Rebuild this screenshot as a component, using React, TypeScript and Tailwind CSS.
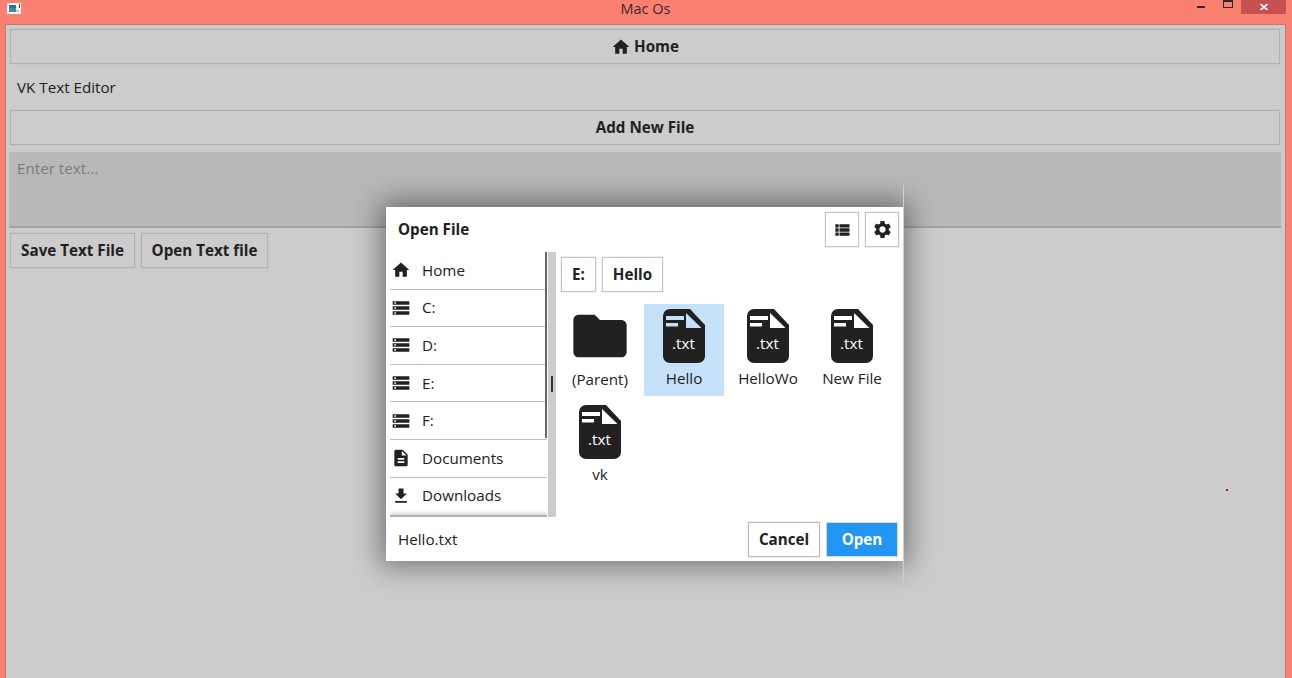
import { MdHome, MdStorage, MdDescription, MdFileDownload, MdSettings, MdFolder } from 'react-icons/md';

const places = [
  { label: 'Home', icon: MdHome },
  { label: 'C:', icon: MdStorage },
  { label: 'D:', icon: MdStorage },
  { label: 'E:', icon: MdStorage },
  { label: 'F:', icon: MdStorage },
  { label: 'Documents', icon: MdDescription },
  { label: 'Downloads', icon: MdFileDownload },
];

function TxtIcon({ hole }: { hole: string }) {
  return (
    <svg width="44" height="54" viewBox="0 0 44 54" className="block">
      <path d="M8 0H28L43 16V47a7 7 0 0 1-7 7H8a7 7 0 0 1-7-7V7a7 7 0 0 1 7-7Z" fill="#212121" />
      <rect x="4" y="7" width="18" height="4" fill={hole} />
      <rect x="4" y="14" width="12" height="3.500" fill={hole} />
      <path d="M24 4V19H39.500Z" fill={hole} />
      <text x="21.500" y="40" textAnchor="middle" fontSize="15.200" fill="#fff" fontFamily="'Open Sans', sans-serif">.txt</text>
    </svg>
  );
}

function FileCell({ name, selected }: { name: string; selected?: boolean }) {
  return (
    <div className={`w-20 h-[92px] flex flex-col items-center pt-[5px] ${selected ? 'bg-[#c6e2fa]' : ''}`}>
      <TxtIcon hole={selected ? '#c6e2fa' : '#ffffff'} />
      <span className="mt-[5px] leading-5">{name}</span>
    </div>
  );
}

export default function App() {
  return (
    <div className="relative h-[678px] w-[1292px] overflow-hidden flex flex-col bg-[#fa8072] text-[#212121] text-[15.200px] font-['Open_Sans',sans-serif]">
      {/* barre de titre */}
      <div className="h-6 shrink-0 flex items-start">
        <div className="flex-1 pl-[7px] pt-[3px]">
          <svg width="14" height="11" viewBox="0 0 14 11" className="block">
            <rect width="14" height="11" fill="#f4f4f4" />
            <rect x="2" y="2" width="7" height="7" fill="#3f8f8c" />
            <rect x="2" y="2" width="7" height="3" fill="#2f6f8f" />
            <rect x="9" y="7" width="3" height="2" fill="#c0c0c0" />
            <rect x="12" y="1" width="1" height="4" fill="#444444" />
          </svg>
        </div>
        <span className="text-[14.500px] leading-4 pt-px text-[#3a2a28] -translate-x-px">Mac Os</span>
        <div className="flex-1 flex justify-end items-start pr-[6px]">
          <div className="w-2 h-[2px] bg-[#2b2b2b] mt-[6px] mr-[18px]" />
          <div className="w-[10px] h-2 border border-[#2b2b2b] border-t-2 mr-2" />
          <div className="w-[45px] h-[14px] bg-[#c75050] flex items-center justify-center">
            <svg width="8" height="6" viewBox="0 0 8 6"><path d="M0.500 0 7.500 6M7.500 0 0.500 6" stroke="#fff" strokeWidth="1.600" /></svg>
          </div>
        </div>
      </div>

      {/* contenu */}
      <div className="flex-1 ml-[5px] mr-[6px] bg-[#cccccc] border-l border-t border-r border-[#c47a70] pl-1 pr-[5px] pt-1 flex flex-col">
        <button className="h-[35px] shrink-0 border border-[#b0b0b0] shadow-[0_0_1px_#b0b0b0] font-bold flex items-center justify-center gap-[3px]">
          <MdHome size={20} />
          Home
        </button>
        <div className="h-[46px] shrink-0 flex items-center pl-[7px]">VK Text Editor</div>
        <button className="h-[35px] shrink-0 border border-[#b0b0b0] shadow-[0_0_1px_#b0b0b0] font-bold">Add New File</button>
        <div className="h-[76px] shrink-0 mt-[7px] -mx-px bg-[#b8b8b8] border-b-2 border-[#a3a3a3] pl-2 pt-[5px] text-[#7b7b7b]">Enter text...</div>
        <div className="mt-[5px] flex gap-[6px]">
          <button className="h-[35px] w-[125px] border border-[#b0b0b0] shadow-[0_0_1px_#b0b0b0] font-bold">Save Text File</button>
          <button className="h-[35px] w-[127px] border border-[#b0b0b0] shadow-[0_0_1px_#b0b0b0] font-bold">Open Text file</button>
        </div>
      </div>

      {/* dialogue */}
      <div className="absolute left-[386px] top-[207px] w-[517px] h-[354px] bg-white shadow-[0_0_26px_6px_rgba(0,0,0,0.42)] flex flex-col">
        <div className="absolute -right-px top-[-22px] bottom-[-22px] w-px bg-[#cfcfcf]" />
        <div className="h-[45px] shrink-0 flex pl-3 pr-1">
          <span className="font-bold flex-1 leading-[45px]">Open File</span>
          <div className="flex gap-[6px] mt-[5px]">
            <div className="w-[34px] h-[35px] border border-[#c4c4c4] shadow-[0_0_1px_#b8b8b8] flex items-center justify-center">
              <svg width="20" height="20" viewBox="0 0 24 24" fill="#212121"><path d="M4 14h4v-4H4v4zm0 5h4v-4H4v4zM4 9h4V5H4v4zm5 5h12v-4H9v4zm0 5h12v-4H9v4zM9 5v4h12V5H9z" /></svg>
            </div>
            <div className="w-[34px] h-[35px] border border-[#c4c4c4] shadow-[0_0_1px_#b8b8b8] flex items-center justify-center"><MdSettings size={21} /></div>
          </div>
        </div>

        <div className="h-[265px] shrink-0 flex pl-1">
          <div className="relative w-[157px] shrink-0">
            <div className="absolute right-0 top-0 w-[2px] h-[186px] bg-[#666666]" />
            {places.map(({ label, icon: Icon }) => (
              <div key={label} className="h-[37.600px] border-b border-[#bdbdbd] flex items-center last:border-b-0 last:h-[37px]">
                <Icon size={20} className="ml-px w-5" />
                <span className="ml-[11px]">{label}</span>
              </div>
            ))}
            <div className="h-[5px] -mt-[5px] bg-gradient-to-b from-white/0 to-[#e0e0e0]" />
            <div className="h-[2px] bg-[#b0b0b0]" />
          </div>
          <div className="relative w-2 ml-px shrink-0 bg-[#cccccc]">
            <div className="absolute left-[3px] top-[124px] w-[2px] h-4 bg-[#333333]" />
          </div>
          <div className="flex-1 pl-[4px] pt-[5px]">
            <div className="flex gap-[6px] font-bold pl-px">
              <div className="h-[35px] w-[35px] border border-[#c4c4c4] shadow-[0_0_1px_#b8b8b8] flex items-center justify-center">E:</div>
              <div className="h-[35px] w-[61px] border border-[#c4c4c4] shadow-[0_0_1px_#b8b8b8] flex items-center justify-center">Hello</div>
            </div>
            <div className="mt-[12px] grid grid-cols-[repeat(4,80px)] gap-1">
              <div className="w-20 h-[92px] flex flex-col items-center pt-[1px]">
                <MdFolder size={64} className="text-[#212121] -mt-[1px] -mb-[3px]" />
                <span className="mt-[4px] leading-5">(Parent)</span>
              </div>
              <FileCell name="Hello" selected />
              <FileCell name="HelloWo" />
              <FileCell name="New File" />
              <FileCell name="vk" />
            </div>
          </div>
        </div>

        <div className="flex-1 flex items-center pl-3 pr-[5px]">
          <span className="flex-1">Hello.txt</span>
          <div className="flex gap-[6px]">
            <button className="h-[35px] w-[72px] border border-[#b8b8b8] shadow-[0_0_1px_#b8b8b8] font-bold">Cancel</button>
            <button className="h-[35px] w-[72px] border border-[#d8d8d8] bg-[#2196f3] text-white font-bold">Open</button>
          </div>
        </div>
      </div>

      <div className="absolute left-[1226px] top-[489px] w-[2px] h-[2px] bg-[#c01020]" />
    </div>
  );
}
